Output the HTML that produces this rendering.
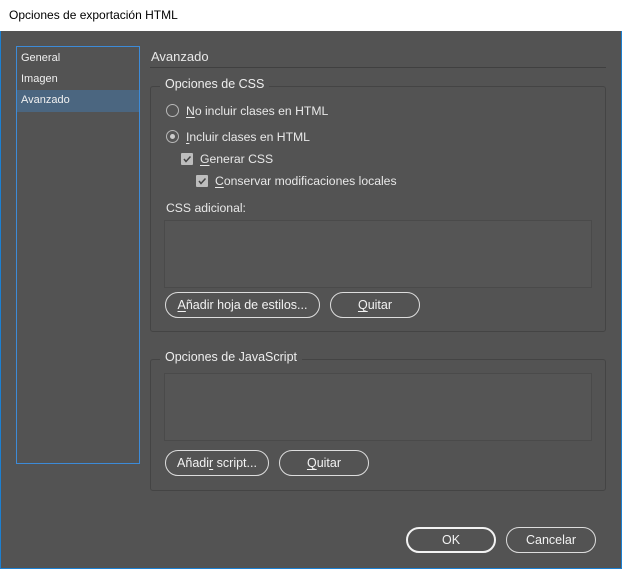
<!DOCTYPE html>
<html><head><meta charset="utf-8"><style>
*{margin:0;padding:0;box-sizing:border-box}
body{width:622px;height:569px;overflow:hidden;background:#535353;font-family:"Liberation Sans",sans-serif;color:#e8e8e8;font-size:12.2px;position:relative}
.a{position:absolute;white-space:nowrap}
#win{position:absolute;left:0;top:0;width:622px;height:569px;border:1px solid #1c7fd0;border-top:none}
#title{position:absolute;left:0;top:0;width:622px;height:31px;background:#fff;color:#000;font-size:12px;padding:8px 0 0 9px}
.list{position:absolute;left:16px;top:46px;width:124px;height:418px;border:1px solid #3d8bd8;background:#535353}
.item{position:absolute;left:4px;font-size:11px;color:#f0f0f0}
.grp{position:absolute;border:1px solid #444;border-radius:3px}
.leg{position:absolute;background:#535353;padding:0 5px;font-size:12.5px;color:#eee}
.ta{position:absolute;border:1px solid #4a4a4a;background:#555}
.btn{position:absolute;border:1.5px solid #ddd;border-radius:13px;text-align:center;font-size:12.5px;color:#f2f2f2;line-height:25px}
.btn.ok{border:2px solid #f2f2f2;line-height:23px}
.rad{position:absolute;width:13px;height:13px;border-radius:50%;border:1.5px solid #b8b8b8}
.chk{position:absolute;width:12px;height:12px;background:#bdbdbd;border-radius:1px}
u{text-decoration:underline;text-underline-offset:2px}
</style></head><body>
<div id="win"></div>
<div id="title">Opciones de exportación HTML</div>
<div class="list">
<div class="item" style="top:5px">General</div>
<div class="item" style="top:26px">Imagen</div>
<div style="position:absolute;left:0;top:43px;width:122px;height:22px;background:#4b6680"></div>
<div class="item" style="top:47px">Avanzado</div>
</div>
<div class="a" style="left:151px;top:49px;font-size:13px">Avanzado</div>
<div class="a" style="left:150px;top:67px;width:456px;height:1px;background:#404040"></div>

<div class="grp" style="left:150px;top:86px;width:456px;height:246px"></div>
<div class="leg" style="left:160px;top:77px">Opciones de CSS</div>
<div class="rad" style="left:166px;top:104px"></div>
<div class="a" style="left:186px;top:104px"><u>N</u>o incluir clases en HTML</div>
<div class="rad" style="left:166px;top:130px;background:#555"><div style="position:absolute;left:3px;top:3px;width:5px;height:5px;border-radius:50%;background:#ccc"></div></div>
<div class="a" style="left:186px;top:130px"><u>I</u>ncluir clases en HTML</div>
<div class="chk" style="left:181px;top:153px"><svg width="12" height="12"><path d="M3 6 L5 8.5 L9.5 3.5" stroke="#444" stroke-width="1.5" fill="none"/></svg></div>
<div class="a" style="left:200px;top:152px"><u>G</u>enerar CSS</div>
<div class="chk" style="left:196px;top:175px"><svg width="12" height="12"><path d="M3 6 L5 8.5 L9.5 3.5" stroke="#444" stroke-width="1.5" fill="none"/></svg></div>
<div class="a" style="left:215px;top:174px"><u>C</u>onservar modificaciones locales</div>
<div class="a" style="left:166px;top:201px">CSS adicional:</div>
<div class="ta" style="left:164px;top:220px;width:428px;height:68px"></div>
<div class="btn" style="left:165px;top:292px;width:155px;height:26px"><u>A</u>ñadir hoja de estilos...</div>
<div class="btn" style="left:330px;top:292px;width:90px;height:26px"><u>Q</u>uitar</div>

<div class="grp" style="left:150px;top:359px;width:456px;height:132px"></div>
<div class="leg" style="left:160px;top:350px">Opciones de JavaScript</div>
<div class="ta" style="left:164px;top:373px;width:428px;height:68px"></div>
<div class="btn" style="left:165px;top:450px;width:104px;height:26px">Añadi<u>r</u> script...</div>
<div class="btn" style="left:279px;top:450px;width:90px;height:26px"><u>Q</u>uitar</div>

<div class="btn ok" style="left:406px;top:527px;width:90px;height:26px">OK</div>
<div class="btn" style="left:506px;top:527px;width:90px;height:26px">Cancelar</div>
</body></html>
